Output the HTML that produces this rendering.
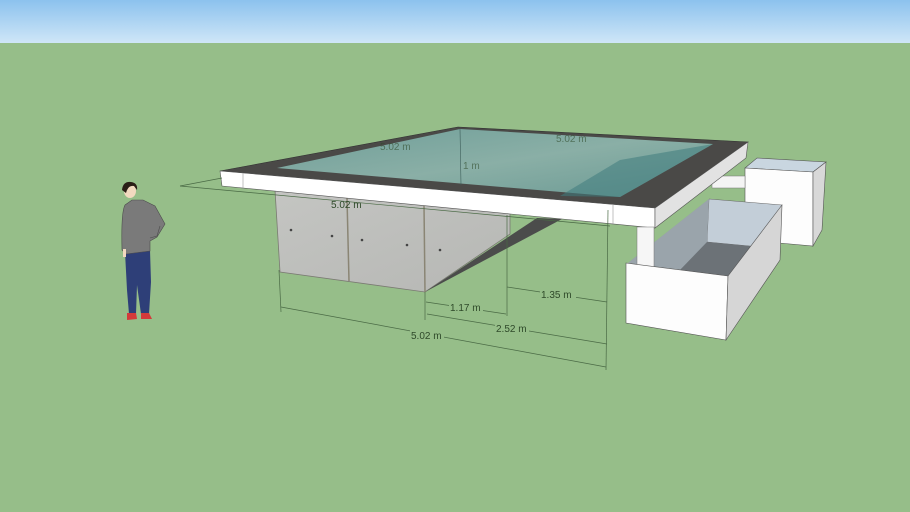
<!DOCTYPE html>
<html><head><meta charset="utf-8"><style>
html,body{margin:0;padding:0;width:910px;height:512px;overflow:hidden;background:#96be89}
svg{display:block}
text{font-family:"Liberation Sans",sans-serif;font-size:10px;fill:#2f4a2a}
</style></head><body>
<svg width="910" height="512" viewBox="0 0 910 512" xmlns="http://www.w3.org/2000/svg">
<defs>
<linearGradient id="sky" x1="0" y1="0" x2="0" y2="1">
<stop offset="0" stop-color="#8cc2ee"/><stop offset="1" stop-color="#cfe6f7"/>
</linearGradient>
<linearGradient id="water" x1="0" y1="0" x2="1" y2="1">
<stop offset="0" stop-color="#6f9e99"/><stop offset="0.5" stop-color="#8aafa6"/><stop offset="1" stop-color="#6a9993"/>
</linearGradient>
<linearGradient id="conc" x1="0" y1="0" x2="1" y2="1">
<stop offset="0" stop-color="#c4c5c2"/><stop offset="1" stop-color="#b6b7b4"/>
</linearGradient>
</defs>
<rect x="0" y="0" width="910" height="43" fill="url(#sky)"/>
<rect x="0" y="43" width="910" height="469" fill="#96be89"/>

<!-- back tank -->
<polygon points="745,168 757,158 826,162 813,172" fill="#c9d6e0" stroke="#555" stroke-width="0.6"/>
<polygon points="745,168 813,172 813,246 745,240" fill="#fdfdfd" stroke="#555" stroke-width="0.6"/>
<polygon points="813,172 826,162 822,230 813,246" fill="#d8d8d8" stroke="#555" stroke-width="0.6"/>
<!-- horizontal pipe -->
<polygon points="712,176 745,176 745,188 712,188" fill="#f4f4f4" stroke="#777" stroke-width="0.5"/>

<!-- concrete wall -->
<polygon points="275,190 510,212 510,234 425,292 280,272" fill="url(#conc)" stroke="#7a7a72" stroke-width="0.8"/>
<line x1="347" y1="198" x2="349" y2="281" stroke="#8a8574" stroke-width="1.5"/>
<line x1="424" y1="205" x2="425" y2="292" stroke="#8a8574" stroke-width="1.5"/>
<circle cx="291" cy="230" r="1.3" fill="#444"/><circle cx="332" cy="236" r="1.3" fill="#444"/>
<circle cx="362" cy="240" r="1.3" fill="#444"/><circle cx="407" cy="245" r="1.3" fill="#444"/>
<circle cx="440" cy="250" r="1.3" fill="#444"/>
<!-- slope -->
<polygon points="425,292 537,218 562,219" fill="#4b4c4b"/>

<!-- slab -->
<polygon points="220,171 458,127 748,142 655,208" fill="#4a4947" stroke="#333" stroke-width="0.6"/>
<polygon points="277,168 460,129 713,144 620,197" fill="url(#water)"/>
<polygon points="560,196 620,160 713,144 620,197" fill="#3f7c7d" opacity="0.55"/>
<line x1="460" y1="129" x2="461" y2="185" stroke="#3d5e5a" stroke-width="0.6"/>
<text x="380" y="150" opacity="0.6">5.02 m</text>
<text x="556" y="142" opacity="0.6">5.02 m</text>
<text x="463" y="169" opacity="0.6">1 m</text>
<polygon points="220,171 655,208 655,228 222,186" fill="#ffffff" stroke="#555" stroke-width="0.6"/>
<line x1="243" y1="173" x2="243" y2="189" stroke="#999" stroke-width="0.6"/>
<line x1="613" y1="205" x2="613" y2="225" stroke="#999" stroke-width="0.6"/>
<polygon points="655,208 748,142 746,158 655,228" fill="#e2e2e2" stroke="#555" stroke-width="0.6"/>

<!-- front tank -->
<polygon points="628,263 709,199 782,205 728,276" fill="#8f99a1"/>
<polygon points="709,199 782,205 760,247 707,242" fill="#c3ced8" stroke="#666" stroke-width="0.5"/>
<polygon points="628,263 709,199 707,242 680,270" fill="#9aa4ab"/>
<polygon points="680,270 707,242 760,247 737,278" fill="#6c7277"/>
<!-- vertical pipe -->
<rect x="637" y="227" width="17" height="40" fill="#f6f6f6" stroke="#777" stroke-width="0.5"/>
<polygon points="626,263 728,276 726,340 626,323" fill="#fdfdfd" stroke="#555" stroke-width="0.6"/>
<polygon points="728,276 782,205 780,260 726,340" fill="#d6d6d6" stroke="#555" stroke-width="0.6"/>

<!-- dimension lines -->
<g stroke="#4a6a45" stroke-width="0.7" fill="none">
<line x1="180" y1="186" x2="610" y2="226"/>
<line x1="180" y1="186" x2="222" y2="178"/>
<line x1="279" y1="270" x2="281" y2="312"/>
<line x1="425" y1="292" x2="425" y2="320"/>
<line x1="507" y1="215" x2="507" y2="316"/>
<line x1="608" y1="210" x2="606" y2="370"/>
<line x1="507" y1="287" x2="607" y2="302"/>
<line x1="426" y1="302" x2="506" y2="314"/>
<line x1="427" y1="314" x2="607" y2="344"/>
<line x1="281" y1="307" x2="606" y2="367"/>
</g>
<rect x="540" y="289" width="36" height="11" fill="#96be89"/>
<text x="541" y="298">1.35 m</text>
<rect x="449" y="302" width="34" height="11" fill="#96be89"/>
<text x="450" y="311">1.17 m</text>
<rect x="495" y="323" width="34" height="11" fill="#96be89"/>
<text x="496" y="332">2.52 m</text>
<rect x="410" y="330" width="34" height="11" fill="#96be89"/>
<text x="411" y="339">5.02 m</text>
<text x="331" y="208">5.02 m</text>

<!-- person -->
<g>
<path d="M125,252 L127,290 L129,314 L136,314 L137,285 L141,314 L149,314 L151,282 L150,250 Z" fill="#2e3f78"/>
<path d="M125,205 Q121,212 122,250 L126,254 L150,251 L150,241 L157,237 L165,224 L155,206 L143,200 L132,200 Z" fill="#7a7a7a" stroke="#4c4c4c" stroke-width="0.6"/>
<path d="M150,238 L157,236 L160,226" fill="none" stroke="#4c4c4c" stroke-width="0.6"/>
<ellipse cx="130" cy="191" rx="6" ry="7" fill="#f2d9bf"/>
<path d="M122,190 Q123,181 131,182 Q138,183 137,190 L134,186 Q128,185 126,193 Z" fill="#2a1e16"/>
<rect x="123" y="249" width="3" height="8" fill="#f2d9bf"/>
<path d="M127,313 L136,313 L137,319 L127,320 Z" fill="#d43a3a"/>
<path d="M141,313 L149,313 L152,319 L141,319 Z" fill="#d43a3a"/>
</g>
</svg>
</body></html>
